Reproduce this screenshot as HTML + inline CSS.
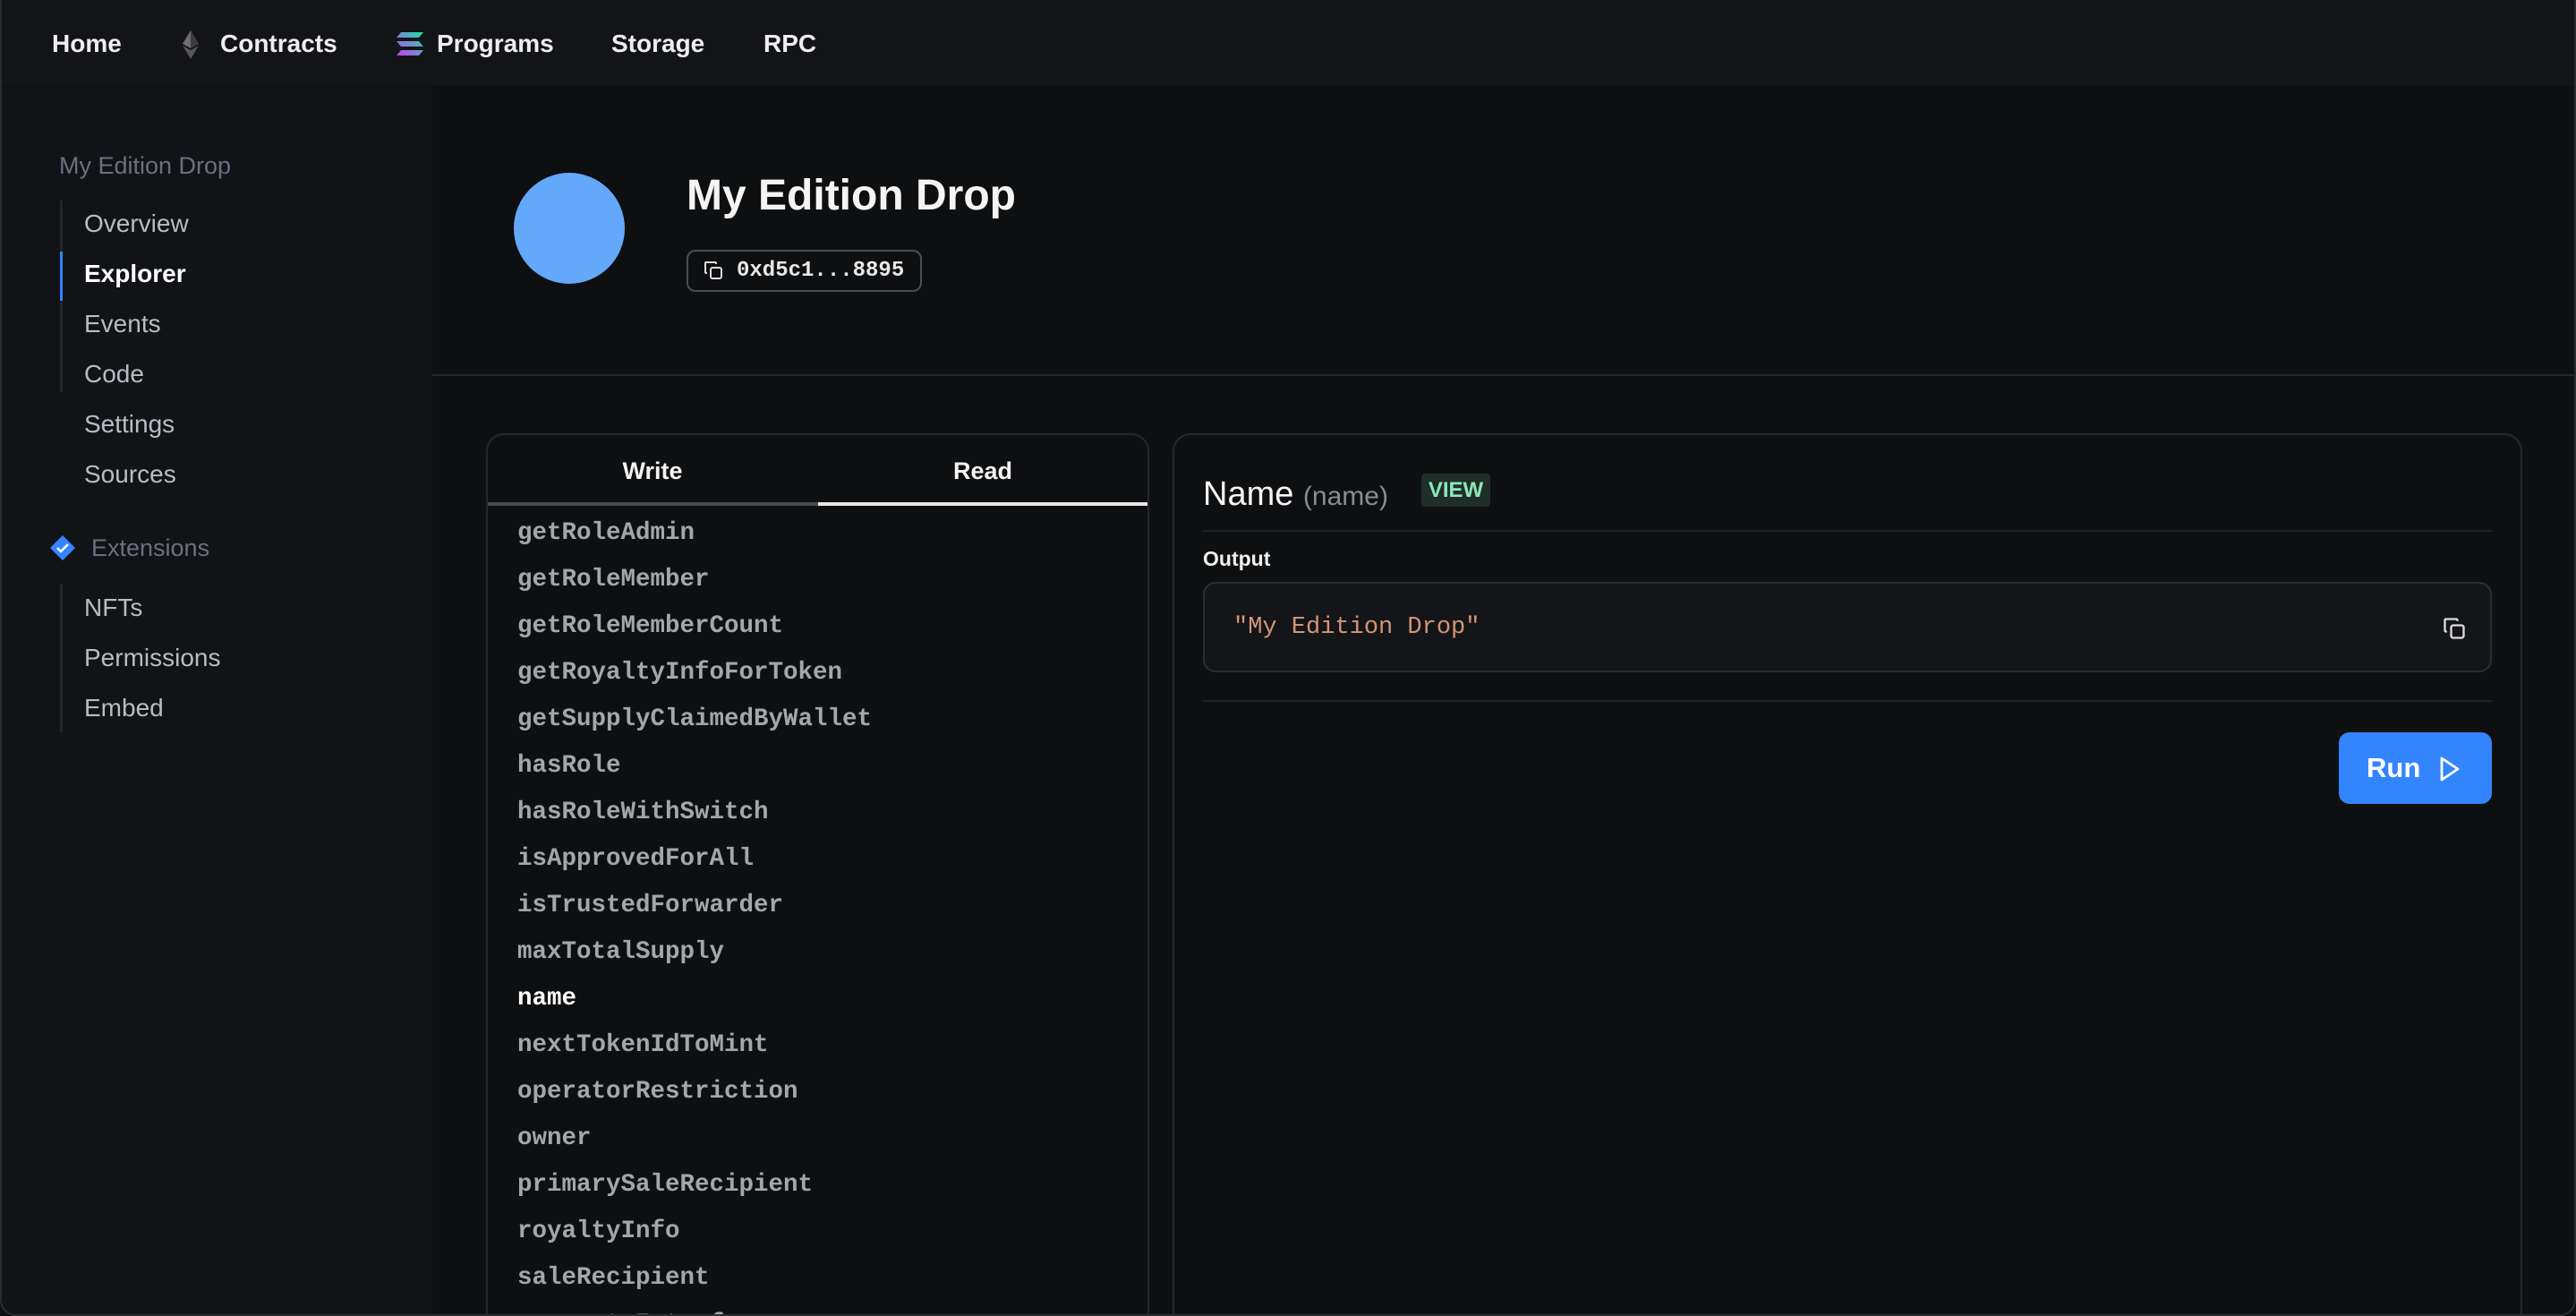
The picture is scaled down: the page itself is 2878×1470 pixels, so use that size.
<!DOCTYPE html>
<html><head><meta charset="utf-8"><style>
*{box-sizing:border-box;margin:0;padding:0}
html,body{width:2878px;height:1470px;overflow:hidden;background:#0e0f11;font-family:"Liberation Sans",sans-serif;color:#f2f2f2}
.frame{position:absolute;left:0;top:0;width:2878px;height:1470px;border-left:2px solid #2a2c31;border-right:2px solid #2a2c31;border-bottom:2px solid #2a2c31;border-radius:0 0 18px 18px;overflow:hidden}
.nav{position:absolute;left:0;top:0;width:100%;height:97px;background:#131418;border-bottom:1px solid #0b0c0e}
.nav .it{position:absolute;top:31px;font-size:28px;font-weight:600;color:#eee;line-height:36px}
.side{position:absolute;left:0;top:97px;width:481px;height:1373px;background:#121317}
.side .title{position:absolute;left:64px;top:73px;font-size:27px;color:#6b7080}
.side .line{position:absolute;left:65px;width:3px;background:#22252b}
.side .i{position:absolute;left:92px;font-size:28px;color:#b9bcc2;line-height:36px}
.main{position:absolute;left:481px;top:97px;width:2397px;height:1373px;overflow:hidden}
.hdr{position:absolute;left:0;top:0;right:0;height:323px;border-bottom:2px solid #24262b}
.card{position:absolute;border:2px solid #25272c;border-radius:20px;background:#0e0f11;overflow:hidden}
.fn{position:absolute;left:33px;font-family:"Liberation Mono",monospace;font-weight:700;font-size:27.5px;color:#a3a6ab;line-height:36px}
</style></head><body><div class="frame">
<div class="nav">
<div class="it" style="left:56px">Home</div>
<svg style="position:absolute;left:202px;top:34px" width="18" height="32" viewBox="0 0 18 32"><path d="M9 0L0 15l9 5 9-5z" fill="#6e6e6e"/><path d="M9 0v20l9-5z" fill="#3c3c3c"/><path d="M0 17l9 15 9-15-9 5z" fill="#555"/></svg>
<div class="it" style="left:244px">Contracts</div>
<svg style="position:absolute;left:441px;top:36px" width="30" height="26" viewBox="0 0 30 26"><defs><linearGradient id="g" x1="0" y1="1" x2="1" y2="0"><stop offset="0" stop-color="#c33ef0"/><stop offset="1" stop-color="#1fe0a8"/></linearGradient></defs><path d="M5 0h25l-5 6H0z M0 10h25l5 6H5z M5 20h25l-5 6H0z" fill="url(#g)"/></svg>
<div class="it" style="left:486px">Programs</div>
<div class="it" style="left:681px">Storage</div>
<div class="it" style="left:851px">RPC</div>
</div>
<div class="side">
<div class="title">My Edition Drop</div>
<div class="line" style="top:127px;height:214px"></div>
<div class="line" style="top:184px;height:55px;background:#3385ff"></div>
<div class="i" style="top:135px">Overview</div>
<div class="i" style="top:191px;color:#fff;font-weight:700">Explorer</div>
<div class="i" style="top:247px">Events</div>
<div class="i" style="top:303px">Code</div>
<div class="i" style="top:359px">Settings</div>
<div class="i" style="top:415px">Sources</div>
<svg style="position:absolute;left:54px;top:501px" width="28" height="28" viewBox="0 0 28 28"><path d="M14 0L28 14 14 28 0 14z" fill="#3385ff"/><path d="M8 14l4 4 8-8" stroke="#fff" stroke-width="2.5" fill="none"/></svg>
<div class="i" style="top:497px;left:100px;color:#6b7080;font-size:27px">Extensions</div>
<div class="line" style="top:555px;height:166px"></div>
<div class="i" style="top:564px">NFTs</div>
<div class="i" style="top:620px">Permissions</div>
<div class="i" style="top:676px">Embed</div>
</div>
<div class="main">
<div class="hdr">
<div style="position:absolute;left:91px;top:96px;width:124px;height:124px;border-radius:50%;background:#63a8fa"></div>
<div style="position:absolute;left:284px;top:94px;font-size:48px;font-weight:700;color:#f4f4f4">My Edition Drop</div>
<div style="position:absolute;left:284px;top:182px;width:263px;height:47px;border:2px solid #4b4d52;border-radius:10px"></div>
<svg style="position:absolute;left:302px;top:193px" width="24" height="24" viewBox="0 0 24 24" fill="none" stroke="#ddd" stroke-width="2"><rect x="9" y="9" width="12" height="12" rx="2"/><path d="M5 15H4a1 1 0 0 1-1-1V4a1 1 0 0 1 1-1h10a1 1 0 0 1 1 1v1"/></svg>
<div style="position:absolute;left:340px;top:191px;font-family:'Liberation Mono',monospace;font-weight:700;font-size:24px;color:#e8e8e8;line-height:30px">0xd5c1...8895</div>
</div>
<div class="card" style="left:60px;top:387px;width:741px;height:1000px">
<div style="position:absolute;left:0;top:25px;width:368px;text-align:center;font-size:27px;font-weight:600;color:#f2f2f2">Write</div>
<div style="position:absolute;left:368px;top:25px;width:370px;text-align:center;font-size:27px;font-weight:600;color:#f2f2f2">Read</div>
<div style="position:absolute;left:0;top:75px;width:369px;height:4px;background:#4a4b4f"></div>
<div style="position:absolute;left:369px;top:75px;width:370px;height:4px;background:#e8e8e8"></div>
<div class="fn" style="top:92px">getRoleAdmin</div>
<div class="fn" style="top:144px">getRoleMember</div>
<div class="fn" style="top:196px">getRoleMemberCount</div>
<div class="fn" style="top:248px">getRoyaltyInfoForToken</div>
<div class="fn" style="top:300px">getSupplyClaimedByWallet</div>
<div class="fn" style="top:352px">hasRole</div>
<div class="fn" style="top:404px">hasRoleWithSwitch</div>
<div class="fn" style="top:456px">isApprovedForAll</div>
<div class="fn" style="top:508px">isTrustedForwarder</div>
<div class="fn" style="top:560px">maxTotalSupply</div>
<div class="fn" style="top:612px;color:#fff">name</div>
<div class="fn" style="top:664px">nextTokenIdToMint</div>
<div class="fn" style="top:716px">operatorRestriction</div>
<div class="fn" style="top:768px">owner</div>
<div class="fn" style="top:820px">primarySaleRecipient</div>
<div class="fn" style="top:872px">royaltyInfo</div>
<div class="fn" style="top:924px">saleRecipient</div>
<div class="fn" style="top:976px">supportsInterface</div>
</div>
<div class="card" style="left:827px;top:387px;width:1508px;height:1000px">
<div style="position:absolute;left:32px;top:42px;font-size:38px;color:#f4f4f4;line-height:48px">Name <span style="font-size:30px;color:#8a8c90">(name)</span></div>
<div style="position:absolute;left:276px;top:43px;width:77px;height:37px;background:#1f2e29;border-radius:4px;color:#8ce8b8;font-size:24px;font-weight:700;text-align:center;line-height:37px">VIEW</div>
<div style="position:absolute;left:32px;top:106px;width:1440px;height:2px;background:#1f2125"></div>
<div style="position:absolute;left:32px;top:125px;font-size:23px;font-weight:700;color:#f0f0f0">Output</div>
<div style="position:absolute;left:32px;top:164px;width:1440px;height:101px;background:#131519;border:2px solid #2a2d33;border-radius:14px"></div>
<div style="position:absolute;left:66px;top:198px;font-family:'Liberation Mono',monospace;font-size:27px;color:#d69473;line-height:34px">"My Edition Drop"</div>
<svg style="position:absolute;left:1416px;top:202px" width="28" height="28" viewBox="0 0 24 24" fill="none" stroke="#ddd" stroke-width="2"><rect x="9" y="9" width="12" height="12" rx="2"/><path d="M5 15H4a1 1 0 0 1-1-1V4a1 1 0 0 1 1-1h10a1 1 0 0 1 1 1v1"/></svg>
<div style="position:absolute;left:32px;top:296px;width:1440px;height:2px;background:#1f2125"></div>
<div style="position:absolute;left:1301px;top:332px;width:171px;height:80px;background:#3385ff;border-radius:12px"></div>
<div style="position:absolute;left:1332px;top:354px;font-size:31px;font-weight:700;color:#fff;line-height:36px">Run</div>
<svg style="position:absolute;left:1412px;top:358px" width="26" height="30" viewBox="0 0 26 30"><path d="M4 3l18 12L4 27z" fill="none" stroke="#fff" stroke-width="2.8" stroke-linejoin="round"/></svg>
</div>
</div>
</div></body></html>
